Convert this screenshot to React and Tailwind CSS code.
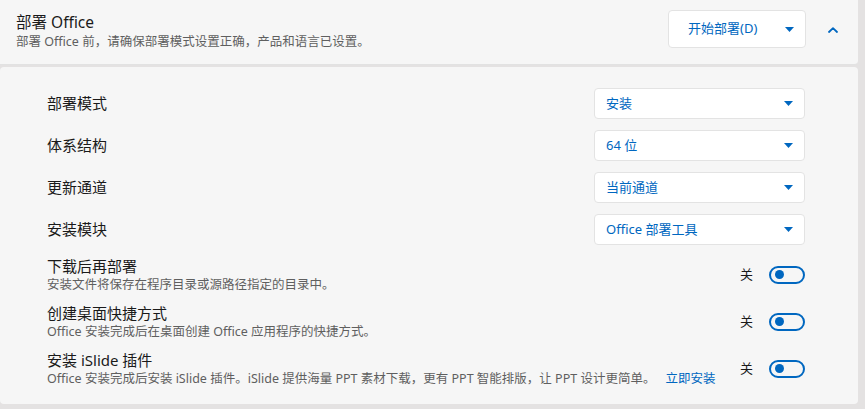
import React from "react";

const FONT = { fontFamily: '"Noto Sans", "Noto Sans CJK SC", sans-serif' };

const Caret = () => (
  <svg width="9" height="5" viewBox="0 0 9 5" className="shrink-0">
    <path d="M0 0 H9 L4.5 5 Z" fill="#0067c0" />
  </svg>
);

const ChevronUp = () => (
  <svg width="10" height="6" viewBox="0 0 10 6">
    <path d="M1 5 L5 1.2 L9 5" stroke="#0067c0" strokeWidth="1.8" fill="none" strokeLinecap="round" strokeLinejoin="round" />
  </svg>
);

const Select = ({ value }) => (
  <div className="flex items-center justify-between w-[211px] h-[31px] pl-[11px] pr-[11px] bg-white border border-[#e3e3e3] rounded-[4px] text-[13px] text-[#0067c0]">
    <span>{value}</span>
    <Caret />
  </div>
);

const Toggle = () => (
  <div className="flex items-center gap-[16px] shrink-0">
    <span className="text-[13px] text-[#1a1a1a]">关</span>
    <div className="w-[36px] h-[18px] rounded-full border-2 border-[#0067c0] flex items-center pl-[4px]">
      <div className="w-[9px] h-[9px] rounded-full bg-[#0067c0]" />
    </div>
  </div>
);

const selectRows = [
  { label: "部署模式", value: "安装" },
  { label: "体系结构", value: "64 位" },
  { label: "更新通道", value: "当前通道" },
  { label: "安装模块", value: "Office 部署工具" },
];

const toggleRows = [
  { title: "下载后再部署", desc: "安装文件将保存在程序目录或源路径指定的目录中。" },
  { title: "创建桌面快捷方式", desc: "Office 安装完成后在桌面创建 Office 应用程序的快捷方式。" },
  {
    title: "安装 iSlide 插件",
    desc: "Office 安装完成后安装 iSlide 插件。iSlide 提供海量 PPT 素材下载，更有 PPT 智能排版，让 PPT 设计更简单。",
    link: "立即安装",
  },
];

export default function App() {
  return (
    <div style={FONT} className="w-[865px] h-[409px] bg-[#e4e2e2] pr-[7px] pb-[5px] overflow-hidden">
      {/* header card */}
      <div className="h-[65px] bg-[#f6f6f6] border-b border-[#e2e2e2] rounded-br-[4px] flex items-center pl-4 pr-[20px]">
        <div className="flex-1 -mt-[3px]">
          <div className="text-[15.5px] leading-[22px] text-[#1a1a1a]">部署 Office</div>
          <div className="text-[12.5px] leading-[18px] text-[#5f5f5f]">部署 Office 前，请确保部署模式设置正确，产品和语言已设置。</div>
        </div>
        <div className="flex items-center justify-between w-[138px] h-[38px] mt-[-6px] pl-[19px] pr-[11px] bg-white border border-[#e3e3e3] rounded-[4px] text-[13px] text-[#0067c0]">
          <span>开始部署(D)</span>
          <Caret />
        </div>
        <div className="ml-[22px] mt-[-4px] flex items-center">
          <ChevronUp />
        </div>
      </div>

      {/* settings card */}
      <div className="mt-[2px] h-[337px] bg-[#f6f6f6] rounded-[4px] pt-[21px] pl-[47px] pr-[53px]">
        <div className="flex flex-col gap-[11px]">
          {selectRows.map((r) => (
            <div key={r.label} className="flex items-center justify-between">
              <span className="text-[15px] text-[#1a1a1a]">{r.label}</span>
              <Select value={r.value} />
            </div>
          ))}
        </div>
        <div className="flex flex-col gap-[10px] mt-[11px]">
          {toggleRows.map((r) => (
            <div key={r.title} className="flex items-center justify-between">
              <div>
                <div className="text-[15px] leading-[20px] text-[#1a1a1a]">{r.title}</div>
                <div className="text-[12.5px] leading-[17px] text-[#5f5f5f] whitespace-nowrap">
                  {r.desc}
                  {r.link && <span className="ml-[10px] text-[#0067c0]">{r.link}</span>}
                </div>
              </div>
              <Toggle />
            </div>
          ))}
        </div>
      </div>
    </div>
  );
}
